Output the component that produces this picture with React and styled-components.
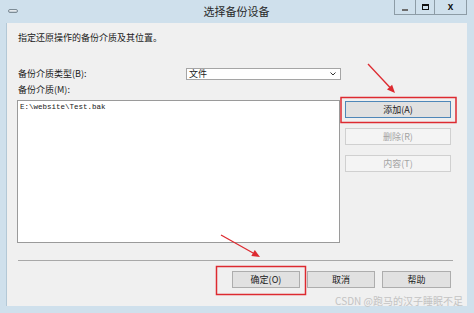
import React from "react";
import styled, { createGlobalStyle } from "styled-components";

const GlobalStyle = createGlobalStyle`
  html, body {
    margin: 0;
    padding: 0;
    background: #cddfeb;
  }
  * {
    box-sizing: border-box;
  }
`;

const Window = styled.div`
  position: relative;
  width: 474px;
  height: 313px;
  display: flex;
  flex-direction: column;
  padding: 0 7px 7px 6px;
  background: #cfe0ec;
  font-family: "Noto Sans CJK SC", "Liberation Sans", sans-serif;
  color: #1a1a1a;
  overflow: hidden;
`;

const TitleBar = styled.div`
  height: 23px;
  display: grid;
  grid-template-columns: 1fr auto 1fr;
  align-items: start;
`;

const AppIcon = styled.div`
  margin: 9px 0 0 2px;
  width: 10px;
  height: 4px;
  border-radius: 2px;
  border: 1px solid #7d8c96;
  background: linear-gradient(#f4f6f8, #b9c4cc);
`;

const Title = styled.div`
  padding-top: 4px;
  font-size: 11px;
  line-height: 15px;
  color: #2a2a2a;
`;

const Controls = styled.div`
  justify-self: end;
  display: flex;
  height: 15px;
  border: 1px solid #8d9ca6;
  border-top: none;
`;

const Ctrl = styled.div`
  width: ${(p) => p.$w}px;
  height: 100%;
  display: flex;
  align-items: center;
  justify-content: center;
  & + & {
    border-left: 1px solid #8d9ca6;
  }
`;

const MinGlyph = styled.div`
  width: 6px;
  height: 2px;
  margin-top: 5px;
  background: #6d6d6d;
`;

const MaxGlyph = styled.div`
  width: 7px;
  height: 6px;
  border: 1px solid #111;
  border-top-width: 2px;
`;

const CloseGlyph = styled.div`
  font-family: "Liberation Sans", sans-serif;
  font-weight: bold;
  font-size: 10px;
  line-height: 10px;
  color: #111;
`;

const Client = styled.div`
  flex: 1;
  background: #f0f0f0;
  border-left: 1px solid #b3c8d6;
  padding: 0 16px 0 10px;
  display: flex;
  flex-direction: column;
  font-size: 9px;
`;

const Intro = styled.div`
  margin-top: 9px;
  line-height: 12px;
  padding-left: 1px;
`;

const TypeRow = styled.div`
  margin-top: 24px;
  display: flex;
  align-items: center;
  height: 12px;
`;

const Label = styled.div`
  width: ${(p) => p.$w || "auto"};
  line-height: 12px;
  padding-left: 1px;
`;

const Select = styled.div`
  width: 155px;
  height: 12px;
  background: #fff;
  border: 1px solid #a5a5a5;
  display: flex;
  align-items: center;
  justify-content: space-between;
  padding: 0 4px 0 2px;
  line-height: 10px;
`;

const Chevron = styled.svg`
  width: 6px;
  height: 4px;
`;

const MediaLabel = styled(Label)`
  margin-top: 4px;
`;

const ListRow = styled.div`
  margin-top: 4px;
  display: flex;
  gap: 5px;
`;

const ListBox = styled.div`
  width: 323px;
  height: 143px;
  background: #fff;
  border: 1px solid #9a9a9a;
  padding: 1px 2px;
  font-family: "Liberation Mono", monospace;
  font-size: 7.5px;
  line-height: 10px;
`;

const SideButtons = styled.div`
  margin-top: 1px;
  display: flex;
  flex-direction: column;
  gap: 10px;
`;

const Button = styled.div`
  width: ${(p) => p.$w || 106}px;
  height: 17px;
  display: flex;
  align-items: center;
  justify-content: center;
  font-size: 9px;
  background: ${(p) => (p.$disabled ? "#f4f4f4" : "#e1e1e1")};
  border: 1px solid
    ${(p) => (p.$default ? "#4f87b8" : p.$disabled ? "#d0d0d0" : "#adadad")};
  color: ${(p) => (p.$disabled ? "#a3a3a3" : "#1a1a1a")};
`;

const Separator = styled.div`
  margin: 17px 0 0 1px;
  height: 1px;
  width: 435px;
  background: #a8a8a8;
`;

const BottomRow = styled.div`
  margin-top: 10px;
  display: flex;
  justify-content: flex-end;
  gap: 7px;
`;

const Watermark = styled.div`
  position: absolute;
  right: 11px;
  bottom: 6px;
  font-size: 10px;
  line-height: 12px;
  color: #c3c3c3;
`;

const Annotations = styled.svg`
  position: absolute;
  left: 0;
  top: 0;
  width: 474px;
  height: 313px;
  pointer-events: none;
`;

const RED = "#dd2a30";

export default function App() {
  return (
    <>
      <GlobalStyle />
      <Window>
        <TitleBar>
          <AppIcon />
          <Title>选择备份设备</Title>
          <Controls>
            <Ctrl $w={20}>
              <MinGlyph />
            </Ctrl>
            <Ctrl $w={19}>
              <MaxGlyph />
            </Ctrl>
            <Ctrl $w={32}>
              <CloseGlyph>x</CloseGlyph>
            </Ctrl>
          </Controls>
        </TitleBar>
        <Client>
          <Intro>指定还原操作的备份介质及其位置。</Intro>
          <TypeRow>
            <Label $w="169px">备份介质类型(B):</Label>
            <Select>
              <span>文件</span>
              <Chevron viewBox="0 0 6 4">
                <path d="M0.5 0.5 L3 3 L5.5 0.5" fill="none" stroke="#333" strokeWidth="1" />
              </Chevron>
            </Select>
          </TypeRow>
          <MediaLabel>备份介质(M):</MediaLabel>
          <ListRow>
            <ListBox>E:\website\Test.bak</ListBox>
            <SideButtons>
              <Button $default>添加(A)</Button>
              <Button $disabled>删除(R)</Button>
              <Button $disabled>内容(T)</Button>
            </SideButtons>
          </ListRow>
          <Separator />
          <BottomRow>
            <Button $w={68}>确定(O)</Button>
            <Button $w={68}>取消</Button>
            <Button $w={69}>帮助</Button>
          </BottomRow>
        </Client>
        <Watermark>CSDN @跑马的汉子睡眠不足</Watermark>
        <Annotations viewBox="0 0 474 313">
          <rect x="341" y="97.5" width="115" height="25" fill="none" stroke={RED} strokeWidth="1.5" />
          <rect x="216.5" y="266.5" width="89" height="28" fill="none" stroke={RED} strokeWidth="1.5" />
          <line x1="368" y1="64" x2="390" y2="87.5" stroke={RED} strokeWidth="1.3" />
          <polygon points="395,93 387,89.5 392.1,84.8" fill={RED} />
          <line x1="221" y1="235" x2="253.5" y2="253.3" stroke={RED} strokeWidth="1.3" />
          <polygon points="260,257 251.3,256.1 254.8,250" fill={RED} />
        </Annotations>
      </Window>
    </>
  );
}
